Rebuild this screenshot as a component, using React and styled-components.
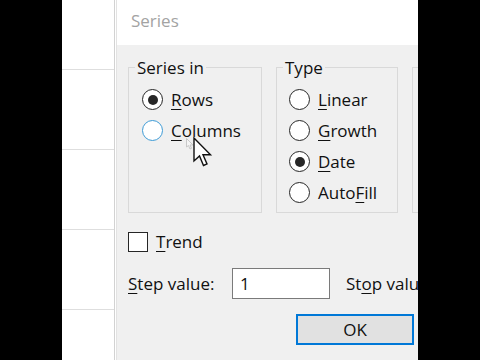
import React from 'react';
import styled, { createGlobalStyle } from 'styled-components';

const Global = createGlobalStyle`
  html, body { margin: 0; padding: 0; background: #000; }
  body { font-family: "Open Sans", "Noto Sans", sans-serif; }
`;

const Screen = styled.div`
  width: 480px;
  height: 360px;
  background: #000;
  display: flex;
  overflow: hidden;
`;

const Viewport = styled.div`
  width: 356px;
  height: 360px;
  margin-left: 62px;
  display: flex;
  overflow: hidden;
  position: relative;
  background: #fff;
`;

const Sheet = styled.div`
  width: 53px;
  flex-shrink: 0;
  border-right: 1px solid #d2d2d2;
  display: flex;
  flex-direction: column;
  padding-top: 69px;
  box-sizing: border-box;
`;

const GridRow = styled.div`
  height: 80px;
  flex-shrink: 0;
  border-top: 1px solid #dedede;
  box-sizing: border-box;
`;

const Dialog = styled.div`
  width: 420px;
  flex-shrink: 0;
  margin-left: 1px;
  border-left: 1px solid #e2e2e2;
  display: flex;
  flex-direction: column;
  background: #f0f0f0;
`;

const TitleBar = styled.div`
  height: 45px;
  box-sizing: border-box;
  background: #fff;
  display: flex;
  align-items: center;
  padding: 0 0 4px 14px;
  font-size: 17px;
  color: #a3a3a3;
`;

const Body = styled.div`
  display: flex;
  flex-direction: column;
  padding: 11px 0 0 11px;
  color: #111;
  font-size: 17px;
`;

const Groups = styled.div`
  display: flex;
  gap: 14px;
`;

const Group = styled.fieldset`
  margin: 0;
  width: ${p => p.$w}px;
  height: 157px;
  box-sizing: border-box;
  border: 1px solid #d9d9d9;
  padding: 0;
  flex-shrink: 0;
`;

const Legend = styled.legend`
  margin-left: 6px;
  padding: 0 2px;
  line-height: 23px;
`;

const Options = styled.div`
  display: flex;
  flex-direction: column;
  gap: ${p => p.$gap || 10}px;
  padding: ${p => p.$pt}px 0 0 ${p => p.$pl}px;
`;

const OptionRow = styled.label`
  display: flex;
  align-items: center;
  gap: 8px;
  height: 21px;
  line-height: 21px;
`;

const Radio = styled.span`
  width: 21px;
  height: 21px;
  box-sizing: border-box;
  border-radius: 50%;
  border: 1.5px solid ${p => (p.$hover ? '#3d9bd6' : '#262626')};
  background: #fff;
  display: flex;
  align-items: center;
  justify-content: center;
  &::after {
    content: '';
    width: 10px;
    height: 10px;
    border-radius: 50%;
    background: ${p => (p.$checked ? '#262626' : 'transparent')};
  }
`;

const Key = styled.span`
  text-decoration: underline;
  text-underline-offset: 3px;
  text-decoration-thickness: 1px;
`;

const CheckRow = styled.label`
  display: flex;
  align-items: center;
  gap: 8px;
  margin-top: 18px;
  height: 21px;
`;

const Box = styled.span`
  width: 20px;
  height: 20px;
  box-sizing: border-box;
  border: 1.5px solid #262626;
  background: #fff;
`;

const StepRow = styled.div`
  display: flex;
  align-items: center;
  margin-top: 16px;
  height: 31px;
`;

const StepLabel = styled.span`
  width: 104px;
`;

const Input = styled.div`
  width: 98px;
  height: 31px;
  box-sizing: border-box;
  border: 1px solid #7a7a7a;
  background: #fff;
  padding-left: 7px;
  display: flex;
  align-items: center;
  margin-right: 16px;
`;

const ButtonRow = styled.div`
  display: flex;
  padding-left: 168px;
  margin-top: 15px;
`;

const Button = styled.div`
  width: 118px;
  height: 31px;
  box-sizing: border-box;
  border: 2px solid #0078d7;
  background: #e1e1e1;
  display: flex;
  align-items: center;
  justify-content: center;
`;

const Cursor = styled.svg`
  position: absolute;
  left: ${p => p.$x}px;
  top: ${p => p.$y}px;
`;

const Option = ({ k, rest, pre = '', checked, hover }) => (
  <OptionRow>
    <Radio $checked={checked} $hover={hover} />
    <span>{pre}<Key>{k}</Key>{rest}</span>
  </OptionRow>
);

const App = () => (
  <Screen>
    <Global />
    <Viewport>
      <Sheet>
        <GridRow />
        <GridRow />
        <GridRow />
        <GridRow />
      </Sheet>
      <Dialog>
        <TitleBar>Series</TitleBar>
        <Body>
          <Groups>
            <Group $w={134}>
              <Legend>Series in</Legend>
              <Options $pt={10} $pl={13}>
                <Option k="R" rest="ows" checked />
                <Option k="C" rest="olumns" hover />
              </Options>
            </Group>
            <Group $w={122}>
              <Legend>Type</Legend>
              <Options $pt={10} $pl={12}>
                <Option k="L" rest="inear" />
                <Option k="G" rest="rowth" />
                <Option k="D" rest="ate" checked />
                <Option pre="Auto" k="F" rest="ill" />
              </Options>
            </Group>
            <Group $w={60}>
              <Legend>&nbsp;</Legend>
            </Group>
          </Groups>
          <CheckRow>
            <Box />
            <span><Key>T</Key>rend</span>
          </CheckRow>
          <StepRow>
            <StepLabel><Key>S</Key>tep value:</StepLabel>
            <Input>1</Input>
            <span>St<Key>o</Key>p value:</span>
          </StepRow>
          <ButtonRow>
            <Button>OK</Button>
          </ButtonRow>
        </Body>
      </Dialog>
      <Cursor $x={124} $y={138} width="8" height="12" viewBox="0 0 8 12">
        <path d="M0.5 0.5 L0.5 9 L2.5 7.5 L4 11 L5.5 10.3 L4 7 L7 7 Z" fill="#f4f4f4" stroke="#c8c8c8" strokeWidth="1" />
      </Cursor>
      <Cursor $x={131} $y={137} width="20" height="32" viewBox="0 0 20 32">
        <path d="M1 1 L1 24 L6.5 19 L10.5 28.5 L14 27 L10 17.8 L17.5 17.8 Z" fill="#fff" stroke="#111" strokeWidth="1.4" strokeLinejoin="miter" />
      </Cursor>
    </Viewport>
  </Screen>
);

export default App;
